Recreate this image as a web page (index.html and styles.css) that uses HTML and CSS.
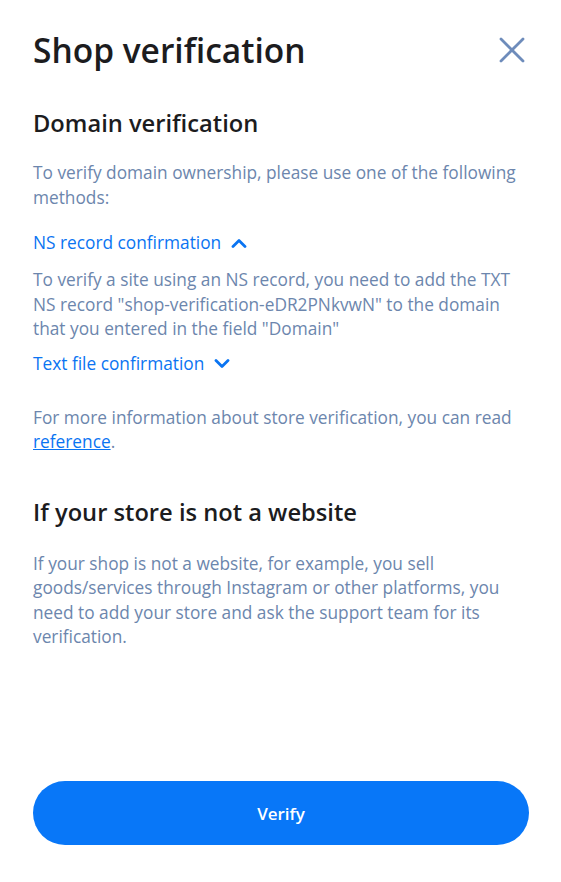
FILE: index.html
```html
<!DOCTYPE html>
<html lang="en">
<head>
  <meta charset="UTF-8">
  <title>Shop verification</title>
  <link rel="stylesheet" href="styles.css">
</head>
<body>
  <div class="modal">
    <div class="modal-header">
      <h1>Shop verification</h1>
      <button class="close-btn" type="button" aria-label="Close">
        <svg width="26" height="26" viewBox="0 0 26 26">
          <path d="M2 2 L24 24 M24 2 L2 24" stroke="currentColor" stroke-width="2.8" stroke-linecap="round" fill="none"/>
        </svg>
      </button>
    </div>

    <div class="modal-body">
      <!-- Domain verification -->
      <h2>Domain verification</h2>
      <p class="text intro">To verify domain ownership, please use one of the following methods:</p>

      <div class="toggle">NS record confirmation
        <svg width="16" height="10" viewBox="0 0 16 10"><path d="M2 8.5 L8 2.5 L14 8.5" stroke="currentColor" stroke-width="2.8" fill="none" stroke-linecap="round" stroke-linejoin="round"/></svg>
      </div>
      <p class="text method-text">To verify a site using an NS record, you need to add the TXT NS record "shop-verification-eDR2PNkvwN" to the domain that you entered in the field "Domain"</p>

      <div class="toggle">Text file confirmation
        <svg width="16" height="10" viewBox="0 0 16 10"><path d="M2 1.5 L8 7.5 L14 1.5" stroke="currentColor" stroke-width="2.8" fill="none" stroke-linecap="round" stroke-linejoin="round"/></svg>
      </div>

      <p class="text more">For more information about store verification, you can read <a href="#">reference</a>.</p>

      <!-- Not a website -->
      <h2 class="second">If your store is not a website</h2>
      <p class="text">If your shop is not a website, for example, you sell goods/services through Instagram or other platforms, you need to add your store and ask the support team for its verification.</p>
    </div>

    <button class="verify-btn" type="button">Verify</button>
  </div>
</body>
</html>
```

FILE: styles.css
```css
body {
  margin: 0;
  font-family: "Open Sans", "Noto Sans", sans-serif;
  background: #fff;
}
.modal {
  height: 882px;
  box-sizing: border-box;
  padding: 28px 32px 37px 33px;
  display: flex;
  flex-direction: column;
}
.modal-header {
  display: flex;
  justify-content: space-between;
  align-items: center;
}
h1 {
  margin: 0;
  font-size: 33.5px;
  font-weight: 600;
  color: #1c1c1e;
  line-height: 44px;
}
.close-btn {
  border: none;
  background: none;
  padding: 0;
  color: #6e8cbb;
  cursor: pointer;
  margin-right: 4px;
  display: flex;
}
.modal-body {
  flex: 1;
}
h2 {
  margin: 35px 0 0;
  font-size: 23.7px;
  font-weight: 600;
  color: #1c1c1e;
  line-height: 32px;
}
h2.second {
  margin-top: 41px;
}
.text {
  margin: 0;
  font-size: 17.3px;
  line-height: 24.5px;
  color: #6c86ad;
}
.intro {
  margin-top: 22px;
}
.toggle {
  display: flex;
  align-items: center;
  gap: 10px;
  font-size: 17.3px;
  line-height: 24px;
  color: #0a74f2;
  margin-top: 21px;
}
.method-text {
  margin-top: 13px;
}
.method-text + .toggle {
  margin-top: 10px;
}
.more {
  margin-top: 30px;
}
.more a {
  color: #0a74f2;
}
.second + .text {
  margin-top: 24px;
}
.verify-btn {
  display: block;
  width: 100%;
  height: 64px;
  border: none;
  border-radius: 32px;
  background: #0877f8;
  color: #fff;
  font-family: inherit;
  font-size: 17px;
  font-weight: 600;
  cursor: pointer;
}
```
